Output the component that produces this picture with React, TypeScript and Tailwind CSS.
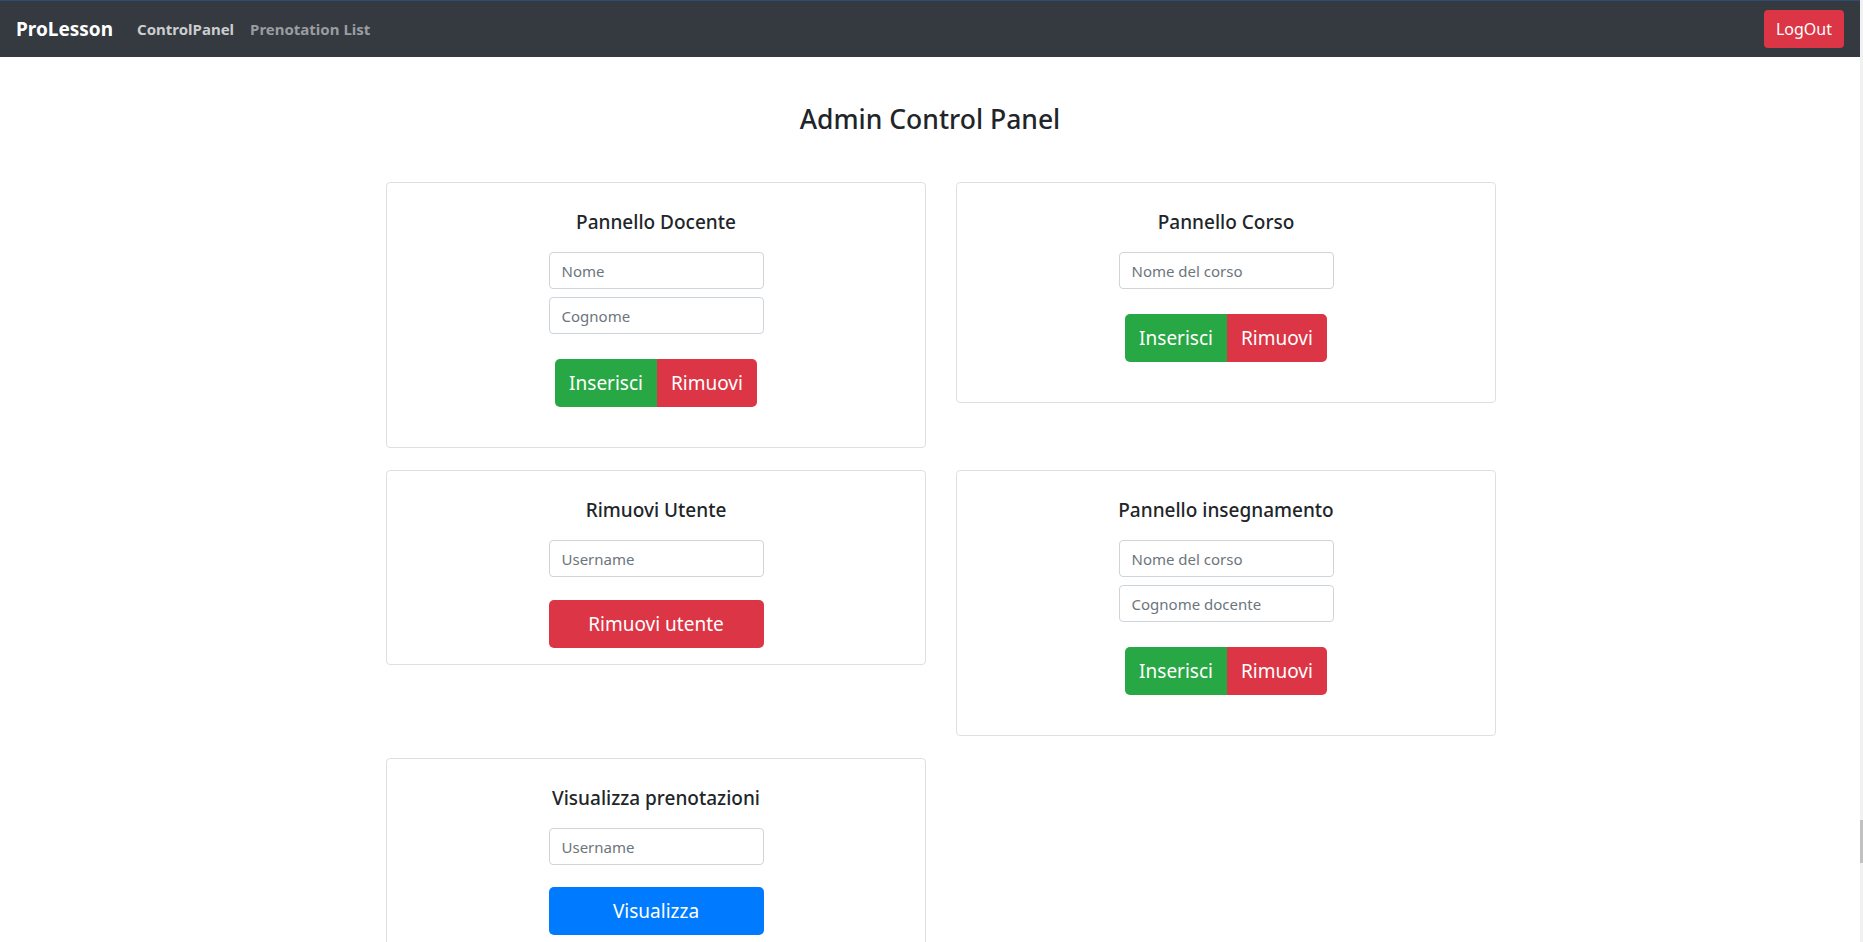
import React from 'react';

type Field = { placeholder: string };

const Input: React.FC<Field> = ({ placeholder }) => (
  <input
    type="text"
    placeholder={placeholder}
    className="h-[37px] w-[215px] rounded-[4px] border border-[#ced4da] bg-white px-[12px] text-[15px] text-[#495057] outline-none placeholder:text-[#6c757d]"
  />
);

const GroupButtons: React.FC = () => (
  <div className="mt-[25px] flex">
    <button className="h-[48px] rounded-l-[5px] bg-[#28a745] px-[14px] text-[19px] leading-[30px] text-white">
      Inserisci
    </button>
    <button className="h-[48px] rounded-r-[5px] bg-[#dc3545] px-[14px] text-[19px] leading-[30px] text-white">
      Rimuovi
    </button>
  </div>
);

const Card: React.FC<{ title: string; fields: string[]; block?: boolean; children?: React.ReactNode }> = ({
  title,
  fields,
  block,
  children,
}) => (
  <div
    className={`flex flex-col items-center rounded-[4px] border border-[#dfdfdf] pt-[27px] ${
      block ? 'pb-[16px]' : 'pb-[40px]'
    }`}
  >
    <h5 className="mb-[18px] text-[19px] font-medium leading-[24px] text-[#212529]">{title}</h5>
    <div className="flex flex-col gap-[8px]">
      {fields.map((f) => (
        <Input key={f} placeholder={f} />
      ))}
    </div>
    {children}
  </div>
);

const App: React.FC = () => {
  return (
    <div className="flex h-[942px] w-full overflow-hidden bg-white font-['Segoe_UI','Noto_Sans',sans-serif]">
      <div className="min-w-0 flex-1">
        {/* Navbar */}
        <nav className="flex h-[57px] items-center border-t border-[#2f4d74] bg-[#343a40] px-4">
          <span className="mr-4 text-[19px] font-bold leading-[30px] text-white">ProLesson</span>
          <a className="px-2 text-[15px] font-bold text-[#cccdcf]">ControlPanel</a>
          <a className="px-2 text-[15px] font-bold text-[#9a9da0]">Prenotation List</a>
          <button className="ml-auto h-[38px] rounded-[4px] bg-[#dc3545] px-3 text-[16px] text-white">
            LogOut
          </button>
        </nav>

        {/* Content */}
        <h3 className="mt-[45px] text-center text-[26.5px] font-medium leading-[34px] text-[#212529]">
          Admin Control Panel
        </h3>

        <div className="ml-[386px] mt-[46px] grid grid-cols-[540px_540px] items-start gap-x-[30px] gap-y-[22px]">
          <Card title="Pannello Docente" fields={['Nome', 'Cognome']}>
            <GroupButtons />
          </Card>
          <Card title="Pannello Corso" fields={['Nome del corso']}>
            <GroupButtons />
          </Card>
          <Card title="Rimuovi Utente" fields={['Username']} block>
            <button className="mt-[23px] h-[48px] w-[215px] rounded-[5px] bg-[#dc3545] text-[19px] text-white">
              Rimuovi utente
            </button>
          </Card>
          <Card title="Pannello insegnamento" fields={['Nome del corso', 'Cognome docente']}>
            <GroupButtons />
          </Card>
          <Card title="Visualizza prenotazioni" fields={['Username']} block>
            <button className="mt-[22px] h-[48px] w-[215px] rounded-[5px] bg-[#007bff] text-[19px] text-white">
              Visualizza
            </button>
          </Card>
        </div>
      </div>

      {/* Scrollbar strip */}
      <div className="flex w-[3px] flex-col bg-[#f1f1f1]">
        <div className="h-[820px]" />
        <div className="h-[43px] bg-[#c1c1c1]" />
      </div>
    </div>
  );
};

export default App;
